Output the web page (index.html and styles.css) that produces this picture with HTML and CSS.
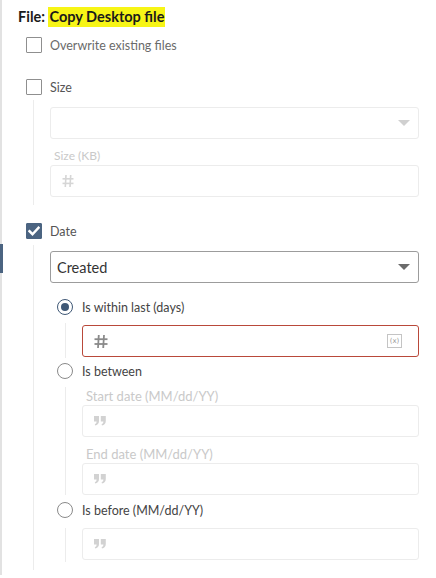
FILE: index.html
```html
<!DOCTYPE html>
<html>
<head>
<meta charset="utf-8">
<link rel="stylesheet" href="styles.css">
</head>
<body>
<div class="page">
  <div class="marker"></div>
  <div class="title">File: <span class="hl">Copy Desktop file</span></div>

  <div class="check-row row-overwrite">
    <span class="cb"></span><span class="lbl lbl-light">Overwrite existing files</span>
  </div>

  <div class="check-row row-size">
    <span class="cb"></span><span class="lbl">Size</span>
  </div>
  <div class="group group-size">
    <div class="select disabled"><span class="sel-text"></span><span class="arrow arrow-light"></span></div>
    <div class="field-label">Size (KB)</div>
    <div class="input disabled">
      <svg class="ico-hash" width="12" height="14" viewBox="0 0 12 14"><g stroke="#d6d6d6" stroke-width="1.6" fill="none"><path d="M4 1 L3.3 13"/><path d="M8.7 1 L8 13"/><path d="M0.5 4.8 H11.5"/><path d="M0.5 9.4 H11.5"/></g></svg>
    </div>
  </div>

  <div class="check-row row-date">
    <span class="cb checked"><svg width="12" height="10" viewBox="0 0 12 10"><path d="M1.5 5.2 L4.5 8.2 L10.5 1.8" stroke="#fff" stroke-width="2.4" fill="none" stroke-linecap="square"/></svg></span><span class="lbl">Date</span>
  </div>
  <div class="group group-date">
    <div class="select"><span class="sel-text">Created</span><span class="arrow"></span></div>

    <div class="radio-row r1"><span class="rd checked"></span><span class="lbl lbl-dark">Is within last (days)</span></div>
    <div class="sub sub1">
      <div class="input error">
        <svg class="ico-hash" width="14" height="15" viewBox="0 0 14 15"><g stroke="#8a8a8a" stroke-width="1.8" fill="none"><path d="M4.8 1 L4 14"/><path d="M10 1 L9.2 14"/><path d="M0.5 5.2 H13.5"/><path d="M0.5 10 H13.5"/></g></svg>
        <span class="var-btn">(x)</span>
      </div>
    </div>

    <div class="radio-row r2"><span class="rd"></span><span class="lbl lbl-dark">Is between</span></div>
    <div class="sub sub2">
      <div class="field-label">Start date (MM/dd/YY)</div>
      <div class="input disabled">
        <svg class="ico-quote" width="12" height="10" viewBox="0 0 12 10"><g fill="#d2d2d2"><path d="M0 0 H5 V5 C5 7.5 3.5 9.2 1.2 9.6 L0.8 8.3 C2 7.9 2.6 7 2.6 5.6 H0 Z"/><path d="M6.8 0 H11.8 V5 C11.8 7.5 10.3 9.2 8 9.6 L7.6 8.3 C8.8 7.9 9.4 7 9.4 5.6 H6.8 Z"/></g></svg>
      </div>
      <div class="field-label fl2">End date (MM/dd/YY)</div>
      <div class="input disabled">
        <svg class="ico-quote" width="12" height="10" viewBox="0 0 12 10"><g fill="#d2d2d2"><path d="M0 0 H5 V5 C5 7.5 3.5 9.2 1.2 9.6 L0.8 8.3 C2 7.9 2.6 7 2.6 5.6 H0 Z"/><path d="M6.8 0 H11.8 V5 C11.8 7.5 10.3 9.2 8 9.6 L7.6 8.3 C8.8 7.9 9.4 7 9.4 5.6 H6.8 Z"/></g></svg>
      </div>
    </div>

    <div class="radio-row r3"><span class="rd"></span><span class="lbl lbl-dark">Is before (MM/dd/YY)</span></div>
    <div class="sub sub3">
      <div class="input disabled">
        <svg class="ico-quote" width="12" height="10" viewBox="0 0 12 10"><g fill="#d2d2d2"><path d="M0 0 H5 V5 C5 7.5 3.5 9.2 1.2 9.6 L0.8 8.3 C2 7.9 2.6 7 2.6 5.6 H0 Z"/><path d="M6.8 0 H11.8 V5 C11.8 7.5 10.3 9.2 8 9.6 L7.6 8.3 C8.8 7.9 9.4 7 9.4 5.6 H6.8 Z"/></g></svg>
      </div>
    </div>
  </div>
</div>
</body>
</html>
```

FILE: styles.css
```css
html, body {
  margin: 0;
  padding: 0;
  background: #fff;
}
body {
  font-family: Lato, "Open Sans", sans-serif;
  color: #444;
}
.page {
  position: relative;
  height: 575px;
  border-left: 2px solid #e2e2e2;
  box-sizing: border-box;
  padding-left: 24px;
  padding-right: 17px;
}
.marker {
  position: absolute;
  left: -2px;
  top: 244px;
  width: 3px;
  height: 29px;
  background: #4b6481;
}
.title {
  margin-left: -8px;
  padding-top: 7px;
  line-height: 20px;
  height: 20px;
  font-size: 14.5px;
  font-weight: 700;
  color: #1a1a1a;
}
.hl {
  background: #f7f516;
  padding: 1px 1px 2px;
}
.check-row {
  display: flex;
  align-items: center;
  gap: 8px;
  height: 16px;
}
.row-overwrite { margin-top: 10px; }
.row-size { margin-top: 26px; }
.row-date { margin-top: 18px; }
.cb {
  width: 16px;
  height: 16px;
  box-sizing: border-box;
  border: 1px solid #8f8f8f;
  border-radius: 1px;
  background: #fff;
  display: flex;
  align-items: center;
  justify-content: center;
  flex: none;
}
.cb.checked {
  background: #4b6481;
  border-color: #4b6481;
}
.lbl {
  font-size: 12.5px;
  line-height: 16px;
  padding-top: 2px;
  color: #555;
}
.lbl-light { color: #6a6a6a; }
.lbl-dark { color: #444; }
.group {
  margin-left: 7px;
  border-left: 1px solid #ececec;
  padding-left: 16px;
}
.group-size {
  margin-top: 5px;
  padding-top: 7px;
  padding-bottom: 8px;
}
.group-date {
  margin-top: 6px;
  padding-top: 6px;
  padding-bottom: 8px;
}
.select {
  height: 32px;
  box-sizing: border-box;
  border: 1px solid #9c9c9c;
  border-radius: 3px;
  display: flex;
  align-items: center;
  justify-content: space-between;
  padding: 0 8px 0 6px;
}
.select.disabled {
  border-color: #ececec;
}
.sel-text {
  font-size: 14.5px;
  color: #333;
}
.arrow {
  width: 0;
  height: 0;
  border-left: 6px solid transparent;
  border-right: 6px solid transparent;
  border-top: 6px solid #6b6b6b;
}
.arrow-light {
  border-top-color: #d0d0d0;
}
.field-label {
  margin-top: 8px;
  line-height: 18px;
  font-size: 12px;
  color: #c9c9c9;
  padding-left: 4px;
}
.input {
  height: 32px;
  box-sizing: border-box;
  border: 1px solid #ececec;
  border-radius: 3px;
  display: flex;
  align-items: center;
  justify-content: space-between;
  padding: 0 16px 0 11px;
}
.input.error {
  border-color: #b9493a;
}
.var-btn {
  width: 15px;
  height: 14px;
  box-sizing: border-box;
  border: 1px solid #c4c4c4;
  font-size: 7px;
  line-height: 12px;
  text-align: center;
  color: #999;
  font-family: "DejaVu Sans", sans-serif;
}
.radio-row {
  display: flex;
  align-items: center;
  gap: 9px;
  height: 16px;
  margin-left: 7px;
}
.r1 { margin-top: 16px; }
.r2 { margin-top: 5px; }
.r3 { margin-top: 7px; }
.rd {
  width: 16px;
  height: 16px;
  box-sizing: border-box;
  border: 1px solid #8a8a8a;
  border-radius: 50%;
  background: #fff;
  flex: none;
  display: flex;
  align-items: center;
  justify-content: center;
}
.rd.checked {
  border: 1.5px solid #3f5876;
}
.rd.checked::after {
  content: "";
  width: 8px;
  height: 8px;
  border-radius: 50%;
  background: #3f5876;
}
.sub {
  margin-left: 15px;
  border-left: 1px solid #ececec;
  padding-left: 16px;
}
.sub1 {
  margin-top: 8px;
  padding-top: 2px;
  padding-bottom: 1px;
}
.sub2 {
  margin-top: 8px;
}
.sub2 .field-label {
  margin-top: 0;
  font-size: 13px;
}
.sub2 .fl2 { margin-top: 8px; }
.sub3 {
  margin-top: 10px;
  padding-bottom: 2px;
}
.ico-hash, .ico-quote { flex: none; }
```
